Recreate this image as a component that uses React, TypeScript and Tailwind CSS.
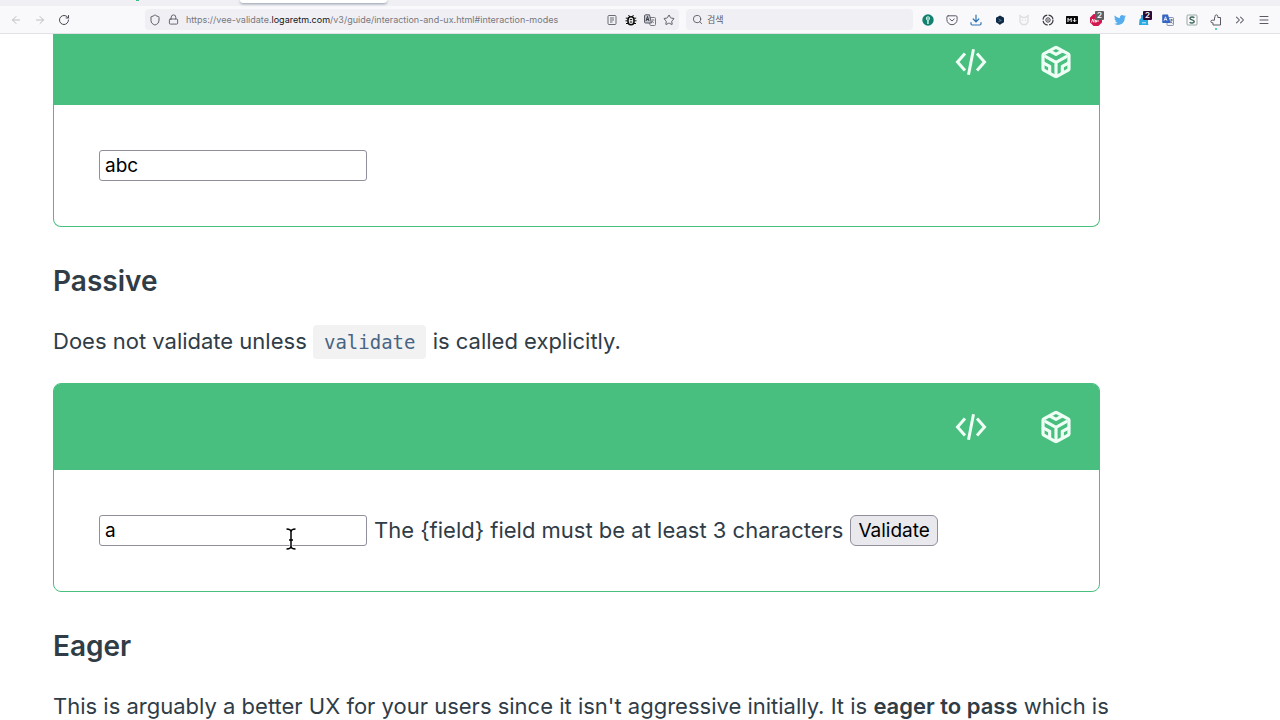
import React, { useState } from 'react';
import {
  ArrowLeft,
  ArrowRight,
  RotateCw,
  Shield,
  Lock,
  Star,
  Search,
  ChevronsRight,
  Menu,
} from 'lucide-react';

const url = {
  prefix: 'https://vee-validate.',
  host: 'logaretm.com',
  path: '/v3/guide/interaction-and-ux.html#interaction-modes',
};

const ReaderIcon = () => (
  <svg width="12" height="12" viewBox="0 0 12 12" fill="none" stroke="#6b6b76">
    <rect x="2" y="1.5" width="8" height="9" rx="1" />
    <path d="M4 4h4M4 6h4M4 8h2.5" />
  </svg>
);

const BugIcon = () => (
  <svg width="12" height="12" viewBox="0 0 12 12" fill="none" stroke="#0c0c0d">
    <path d="M3.5 1l1.5 2M8.5 1L7 3M0.8 4.2h2M9.2 4.2h2M0.5 6.8h2M9.5 6.8h2M1 9.5h2M9 9.5h2" />
    <rect x="3" y="2.8" width="6" height="8" rx="3" strokeWidth="1.6" />
    <path d="M4.8 5.6h2.4M4.8 8h2.4" />
  </svg>
);

const TranslateIcon = () => (
  <svg width="12" height="12" viewBox="0 0 12 12" fill="none" stroke="#7b7b86">
    <path d="M5 3.5h5.5a1 1 0 0 1 1 1v6a1 1 0 0 1-1 1H6.5L5 9" />
    <path d="M1.5.8h4L7.5 9h-6a1 1 0 0 1-1-1V1.8a1 1 0 0 1 1-1z" fill="#c4c4cc" stroke="#5b5b66" />
    <path d="M2 7l1.5-4.5L5 7M2.5 5.5h2" stroke="#3a3a44" />
    <path d="M7.500 6h3M9 5v1c0 1-.5 2-1.500 3M8 7l2 2" strokeWidth="0.7" />
  </svg>
);

const PasswordIcon = () => (
  <svg width="12" height="12" viewBox="0 0 12 12">
    <circle cx="6" cy="6" r="5.7" fill="#14806f" />
    <path d="M6 2.200a2.200 2.200 0 0 0-.8 4.200V10h1.500V6.400A2.200 2.200 0 0 0 6 2.200z" fill="#c9f3e4" />
    <path d="M6 3v3" stroke="#14806f" strokeWidth="0.8" />
  </svg>
);

const PocketIcon = () => (
  <svg width="12" height="12" viewBox="0 0 12 12" fill="none" stroke="#5b5b66" strokeLinecap="round">
    <path d="M2.200 1.800h7.600a1.300 1.300 0 0 1 1.300 1.300v2.500a5.100 5.100 0 0 1-10.200 0V3.100a1.300 1.300 0 0 1 1.300-1.300z" />
    <path d="M3.8 5l2.2 2 2.2-2" />
  </svg>
);

const DownloadIcon = () => (
  <svg width="12" height="12" viewBox="0 0 12 12" fill="none" stroke="#2f74b5" strokeWidth="1.2" strokeLinecap="round">
    <path d="M6 1v6.5M3.2 5L6 7.8 8.8 5M1 8.500v1.300A1.200 1.200 0 0 0 2.200 11h7.600A1.200 1.200 0 0 0 11 9.800V8.500" />
  </svg>
);

const HexIcon = () => (
  <svg width="10" height="10" viewBox="0 0 10 10">
    <path d="M5 .4l4 2.300v4.600L5.600 9.300 5 10 3.800 9 1 7.300V2.700z" fill="#0f2b46" />
    <path d="M3.5 4l2.8 1.500-2.800 1" stroke="#6d93ad" strokeWidth="0.7" fill="none" />
  </svg>
);

const MaskIcon = () => (
  <svg width="12" height="12" viewBox="0 0 12 12" fill="none" stroke="#dedee2" strokeWidth="1.3">
    <path d="M2 1.500L4.500 3.500h3L10 1.500V8L8 10.500H4L2 8z" />
    <path d="M4 6l1 .8M8 6l-1 .8" />
  </svg>
);

const RingIcon = () => (
  <svg width="12" height="12" viewBox="0 0 12 12" fill="none" stroke="#3c3c44">
    <circle cx="6" cy="6" r="5" strokeWidth="1.2" strokeDasharray="6.500 1.350" />
    <circle cx="6" cy="6" r="2.2" />
    <circle cx="6" cy="6" r="0.4" />
  </svg>
);

const MarkdownIcon = () => (
  <svg width="12" height="8" viewBox="0 0 12 8">
    <rect width="12" height="8" rx="0.5" fill="#08080a" />
    <path d="M2 6V2.300l1.600 2 1.600-2V6M8.600 2v3.500M7 4.200l1.600 1.600 1.600-1.600" fill="none" stroke="#fff" />
  </svg>
);

const AdblockIcon = () => (
  <svg width="12" height="12" viewBox="0 0 12 12">
    <path d="M3.600 0h4.800L12 3.600v4.800L8.400 12H3.600L0 8.400V3.600z" fill="#d3184f" />
    <path d="M1.500 8.500l1.200-3.500 1.200 3.500M5 5v3h1.500V6.500H5M8 8V5.500h1.800" fill="none" stroke="#fff" strokeWidth="0.9" />
  </svg>
);

const TwitterIcon = () => (
  <svg width="12" height="12" viewBox="0 0 24 24" fill="#55acee">
    <path d="M23.954 4.569c-.885.389-1.830.654-2.825.775 1.014-.611 1.794-1.574 2.163-2.723-.951.555-2.005.959-3.127 1.184-.896-.959-2.173-1.559-3.591-1.559-2.717 0-4.920 2.203-4.920 4.917 0 .390.045.765.127 1.124C7.691 8.094 4.066 6.130 1.640 3.161c-.427.722-.666 1.561-.666 2.475 0 1.710.870 3.213 2.188 4.096-.807-.026-1.566-.248-2.228-.616v.061c0 2.385 1.693 4.374 3.946 4.827-.413.111-.849.171-1.296.171-.314 0-.615-.030-.916-.086.631 1.953 2.445 3.377 4.604 3.417-1.680 1.319-3.809 2.105-6.102 2.105-.390 0-.779-.023-1.170-.067 2.189 1.394 4.768 2.209 7.557 2.209 9.054 0 13.999-7.496 13.999-13.986 0-.209 0-.420-.015-.630.961-.689 1.800-1.560 2.460-2.548z" />
  </svg>
);

const BellIcon = () => (
  <svg width="12" height="12" viewBox="0 0 12 12">
    <path d="M3 1h5v3l2 1v4.500l.5 1.500H1L1.500 5.500 3 4z" fill="#29abe2" />
    <path d="M4 8.800h4" stroke="#fff" strokeWidth="0.8" />
  </svg>
);

const GoogleTranslateIcon = () => (
  <svg width="12" height="12" viewBox="0 0 12 12">
    <rect x="5" y="3.5" width="6.5" height="8" rx="0.8" fill="#eef1f6" stroke="#6d7f9e" strokeWidth="0.8" />
    <path d="M1 .5h5L8.500 9H1a.8.8 0 0 1-.8-.8V1.300A.8.800 0 0 1 1 .5z" fill="#3465c4" />
    <path d="M2 6.800l1.500-4 1.500 4M2.500 5.500h2" fill="none" stroke="#fff" strokeWidth="0.8" />
    <path d="M7.500 6h3.500M9.500 5v1c0 1-.7 2-1.500 3M8.500 7.500l2 2" fill="none" stroke="#53688c" strokeWidth="0.8" />
  </svg>
);

const StylusIcon = () => (
  <svg width="12" height="12" viewBox="0 0 12 12" fill="none">
    <rect x="1" y="1" width="10" height="10" rx="1" stroke="#9aa8a5" />
    <path d="M8.300 3.800C7.500 2.800 4 2.700 4 4.400 4 6.200 8.200 5.600 8.200 7.600 8.200 9.400 4.600 9.300 3.700 8.200" stroke="#41695f" strokeWidth="1.5" />
  </svg>
);

const PuzzleIcon = () => (
  <svg width="12" height="12" viewBox="0 0 12 12" fill="none" stroke="#5b5b66" strokeLinejoin="round">
    <path d="M5 3.500V2.300a1.400 1.400 0 0 1 2.800 0v1.200H10.500V11H3V8.800H2.200a1.300 1.300 0 0 1 0-2.600H4.500V3.500z" />
  </svg>
);

const CodeIcon = () => (
  <svg width="32" height="28" viewBox="0 0 32 28" fill="none" stroke="#effff6" strokeWidth="3">
    <path d="M10 5.500L2.500 14l7.500 8.500M22 5.500l7.500 8.500-7.500 8.500M18.500 1.200l-5 25.600" />
  </svg>
);

const SandboxIcon = () => (
  <svg
    width="38"
    height="38"
    viewBox="0 0 24 24"
    fill="none"
    stroke="#effff6"
    strokeWidth="2"
    strokeLinecap="round"
    strokeLinejoin="round"
  >
    <path d="M20.200 7.700v8.600a1 1 0 0 1-.5.8l-7.200 4a1 1 0 0 1-1 0l-7.200-4a1 1 0 0 1-.5-.8V7.700a1 1 0 0 1 .5-.8l7.200-4a1 1 0 0 1 1 0l7.200 4a1 1 0 0 1 .5.8z" />
    <path d="M5.500 8.600L12 12.200l6.500-3.600M12 12.200V20.500" />
    <path d="M20 12.500l-4 2.200v4M4 12.500l4 2.200v4M8.500 5.300L12 7.200l3.500-1.900" />
  </svg>
);

const TextCursor = () => (
  <svg width="12" height="24" viewBox="0 0 12 24" fill="none">
    <path d="M1.500 2Q6 2 6 5V19Q6 22 1.500 22M10.500 2Q6 2 6 5M6 19Q6 22 10.500 22M4 13h4" stroke="#fff" strokeWidth="3" />
    <path d="M1.500 2Q6 2 6 5V19Q6 22 1.500 22M10.500 2Q6 2 6 5M6 19Q6 22 10.500 22M4 13h4" stroke="#000" strokeWidth="1.5" />
  </svg>
);

const extensions = [
  { label: 'Password manager', icon: <PasswordIcon /> },
  { label: 'Save to Pocket', icon: <PocketIcon /> },
  { label: 'Downloads', icon: <DownloadIcon /> },
  { label: 'DeepL', icon: <HexIcon /> },
  { label: 'Privacy mask', icon: <MaskIcon /> },
  { label: 'Proxy', icon: <RingIcon /> },
  { label: 'Markdown', icon: <MarkdownIcon /> },
  { label: 'Ad blocker', icon: <AdblockIcon />, badge: '2', badgeClass: 'bg-[#5f6063]' },
  { label: 'Twitter', icon: <TwitterIcon /> },
  { label: 'Notifications', icon: <BellIcon />, badge: '2', badgeClass: 'bg-[#2b0a35]' },
  { label: 'Translate page', icon: <GoogleTranslateIcon /> },
  { label: 'Stylus', icon: <StylusIcon /> },
  { label: 'Extensions', icon: <PuzzleIcon />, dot: true },
  { label: 'More tools', icon: <ChevronsRight size={14} strokeWidth={1.8} color="#5b5b66" /> },
  { label: 'Menu', icon: <Menu size={12} strokeWidth={2} color="#5b5b66" /> },
];

const toolButton = 'relative flex h-6 w-6 shrink-0 items-center justify-center';

const BrowserBar = () => {
  const [query, setQuery] = useState('');

  return (
    <header className="shrink-0 border-b border-[#e2e2e6] bg-[#f9f9fb]">
      <div className="flex h-[6px] items-start bg-[#f0f0f4] pl-[136px]">
        <div className="h-px w-[3px] bg-[#42b983]" />
        <div className="ml-[101px] h-[3px] w-[147px] rounded-b-sm bg-white shadow-sm shadow-gray-400" />
      </div>
      <div className="flex h-[27px] items-center px-1">
        <button aria-label="Back" className={toolButton}>
          <ArrowLeft size={12} color="#bdbdc4" />
        </button>
        <button aria-label="Forward" className={toolButton}>
          <ArrowRight size={12} color="#bdbdc4" />
        </button>
        <button aria-label="Reload" className={toolButton}>
          <RotateCw size={12} color="#4a4a55" />
        </button>
        <div className="ml-[69px] flex h-[21px] min-w-0 flex-1 items-center rounded-sm bg-[#f0f0f4] pl-1 pr-[2px]">
          <Shield size={12} color="#5b5b66" className="shrink-0" />
          <Lock size={11} color="#5b5b66" className="ml-[7px] shrink-0" />
          <div className="ml-[7px] min-w-0 flex-1 truncate text-[9px] text-[#77777f]">
            {url.prefix}
            <span className="text-[#15141a]">{url.host}</span>
            {url.path}
          </div>
          <div className="flex shrink-0 items-center gap-[7px] pr-[2px]">
            <button aria-label="Reader view"><ReaderIcon /></button>
            <button aria-label="Debug"><BugIcon /></button>
            <button aria-label="Translate"><TranslateIcon /></button>
            <button aria-label="Bookmark"><Star size={12} color="#5b5b66" /></button>
          </div>
        </div>
        <label className="ml-[7px] mr-[3px] flex h-[21px] w-[227px] shrink-0 items-center gap-1 rounded-sm bg-[#f0f0f4] pl-[6px]">
          <Search size={11} color="#5b5b66" />
          <input
            type="text"
            aria-label="검색"
            placeholder="검색"
            value={query}
            onChange={(e) => setQuery(e.target.value)}
            className="min-w-0 flex-1 bg-transparent text-[9px] outline-none placeholder:text-[#5b5b66]"
          />
        </label>
        {extensions.map((ext) => (
          <button key={ext.label} aria-label={ext.label} className={toolButton}>
            {ext.icon}
            {ext.badge && (
              <span
                className={`absolute right-[4px] top-[3px] flex h-[9px] w-[9px] items-center justify-center rounded-[1px] text-[8px] font-semibold leading-none text-white ${ext.badgeClass}`}
              >
                {ext.badge}
              </span>
            )}
            {ext.dot && <span className="absolute bottom-[2px] h-[2px] w-[2px] rounded-full bg-[#2ac3a2]" />}
          </button>
        ))}
      </div>
    </header>
  );
};

const Example = ({ continued = false, children }) => (
  <section
    className={
      continued
        ? 'rounded-b-lg border border-t-0 border-[#48bf7e]'
        : 'rounded-lg border border-[#48bf7e]'
    }
  >
    <div
      className={
        continued
          ? 'flex h-[71px] items-start justify-end gap-[50px] bg-[#48bf7e] pr-6 pt-[9px]'
          : 'flex h-[86px] items-center justify-end gap-[50px] rounded-t-md bg-[#48bf7e] pr-6'
      }
    >
      <button aria-label="View code" className="flex h-[38px] items-center">
        <CodeIcon />
      </button>
      <button aria-label="Open in CodeSandbox">
        <SandboxIcon />
      </button>
    </div>
    <div className="flex flex-wrap items-center gap-[7px] p-[45px]">{children}</div>
  </section>
);

const inputClass =
  'h-[31px] w-[268px] rounded-[3px] border border-[#8f8f9d] bg-white px-[5px] text-[19px] text-black outline-none';

export default function App() {
  const [first, setFirst] = useState('abc');
  const [second, setSecond] = useState('a');

  return (
    <div className="flex h-screen flex-col overflow-hidden bg-white font-[Inter,'Noto_Sans_CJK_KR',sans-serif] text-[#303c46]">
      <BrowserBar />
      <main className="min-h-0 flex-1 overflow-hidden pl-[53px] pr-[180px] text-[22px] leading-9">
        <Example continued>
          <input
            type="text"
            aria-label="Aggressive field"
            value={first}
            onChange={(e) => setFirst(e.target.value)}
            className={inputClass}
          />
        </Example>

        <h3 className="mt-9 text-[28px] font-semibold leading-9">Passive</h3>
        <p className="my-6">
          Does not validate unless{' '}
          <code className="rounded-sm bg-[#f2f2f2] px-[11px] py-[6px] font-['DejaVu_Sans_Mono',monospace] text-[19px] leading-none text-[#476582]">
            validate
          </code>{' '}
          is called explicitly.
        </p>

        <Example>
          <div className="relative flex">
            <input
              type="text"
              aria-label="Passive field"
              value={second}
              onChange={(e) => setSecond(e.target.value)}
              className={inputClass}
            />
            <span className="pointer-events-none absolute left-[186px] top-3">
              <TextCursor />
            </span>
          </div>
          <span className="leading-[31px]">The {'{field}'} field must be at least 3 characters</span>
          <button className="h-[31px] rounded-md border border-[#8f8f9d] bg-[#e9e9ed] px-[7px] text-[19px] leading-none text-black">
            Validate
          </button>
        </Example>

        <h3 className="mt-9 text-[28px] font-semibold leading-9">Eager</h3>
        <p className="mt-6 whitespace-nowrap">
          This is arguably a better UX for your users since it isn't aggressive initially. It is{' '}
          <strong className="font-semibold">eager to pass</strong> which is
        </p>
      </main>
    </div>
  );
}
